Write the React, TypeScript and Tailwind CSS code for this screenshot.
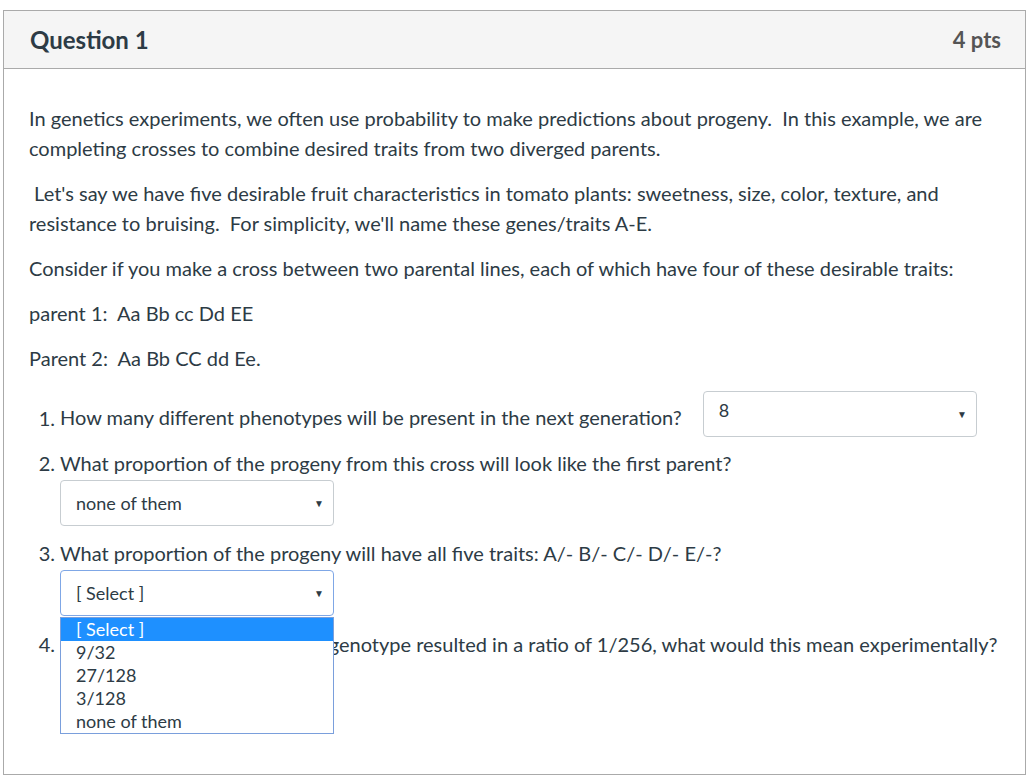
import React from "react";

const OPTIONS = ["[ Select ]", "9/32", "27/128", "3/128", "none of them"];

function FakeSelect({ value, focused, raised }: { value: string; focused?: boolean; raised?: boolean }) {
  return (
    <div
      className={`flex h-[46px] w-[274px] shrink-0 items-center justify-between rounded-[4px] border bg-white pl-[15px] pr-[9px] text-[18px] text-[#2d3b45] ${
        focused ? "border-[#7fa7e6]" : "border-[#c7cdd1]"
      }`}
    >
      <span className={raised ? "-translate-y-[4px]" : ""}>{value}</span>
      <span className="text-[10px] text-[#2d3b45]">▼</span>
    </div>
  );
}

function Num({ n, pad }: { n: number; pad?: boolean }) {
  return <span className={`w-[30px] shrink-0 pr-[5px] text-right ${pad ? "pt-[12px]" : ""}`}>{n}.</span>;
}

export default function App() {
  return (
    <div
      className="min-h-screen bg-white pt-[10px] pl-[3px] text-[#2d3b45]"
      style={{ fontFamily: "Lato, 'Noto Sans', sans-serif" }}
    >
      <div className="w-[1023px] border border-[#aaaaaa]">
        <div className="flex h-[58px] items-center justify-between border-b border-[#aaaaaa] bg-[#f5f5f5] pl-[26px] pr-[24px]">
          <h2 className="text-[24px] font-bold">Question 1</h2>
          <span className="text-[22px] font-bold text-[#555555]">4 pts</span>
        </div>

        <div className="pl-[25px] pr-[24px] pt-[34px] pb-[67px] text-[20px] leading-[30px]">
          <p>
            In genetics experiments, we often use probability to make predictions about progeny.&nbsp; In this
            example, we are completing crosses to combine desired traits from two diverged parents.
          </p>
          <p className="mt-[15px]">
            &nbsp;Let's say we have five desirable fruit characteristics in tomato plants: sweetness, size, color,
            texture, and resistance to bruising.&nbsp; For simplicity, we'll name these genes/traits A-E.
          </p>
          <p className="mt-[15px]">
            Consider if you make a cross between two parental lines, each of which have four of these desirable
            traits:
          </p>
          <p className="mt-[15px]">parent 1:&nbsp; Aa Bb cc Dd EE</p>
          <p className="mt-[15px]">Parent 2:&nbsp; Aa Bb CC dd Ee.</p>

          <div className="ml-[1px]">
            <div className="mt-[18px] flex items-start">
              <Num n={1} pad />
              <span className="pt-[11px]">How many different phenotypes will be present in the next generation?</span>
              <div className="ml-[21px]">
                <FakeSelect value="8" raised />
              </div>
            </div>

            <div className="mt-[11px] flex">
              <Num n={2} />
              <div>
                <div>What proportion of the progeny from this cross will look like the first parent?</div>
                <div className="mt-[2px]">
                  <FakeSelect value="none of them" />
                </div>
              </div>
            </div>

            <div className="mt-[12px] flex">
              <Num n={3} />
              <div className="relative">
                <div>What proportion of the progeny will have all five traits: A/- B/- C/- D/- E/-?</div>
                <div className="mt-[2px]">
                  <FakeSelect value="[ Select ]" focused />
                </div>
                <div className="absolute left-0 top-[79px] z-10 w-[274px] border border-[#7a9fdc] bg-white text-[18px]">
                  {OPTIONS.map((o, i) => (
                    <div
                      key={o}
                      className={`h-[23px] pl-[15px] leading-[22px] ${
                        i === 0 ? "bg-[#1e90ff] text-white" : "text-[#2d3b45]"
                      }`}
                    >
                      {o}
                    </div>
                  ))}
                </div>
              </div>
            </div>

            <div className="mt-[13px] flex">
              <Num n={4} />
              <div>
                <div>
                  If you noticed that a particular genotype resulted in a ratio of 1/256, what would this mean
                  experimentally?
                </div>
                <div className="mt-[2px]">
                  <FakeSelect value="[ Select ]" />
                </div>
              </div>
            </div>
          </div>
        </div>
      </div>
    </div>
  );
}
